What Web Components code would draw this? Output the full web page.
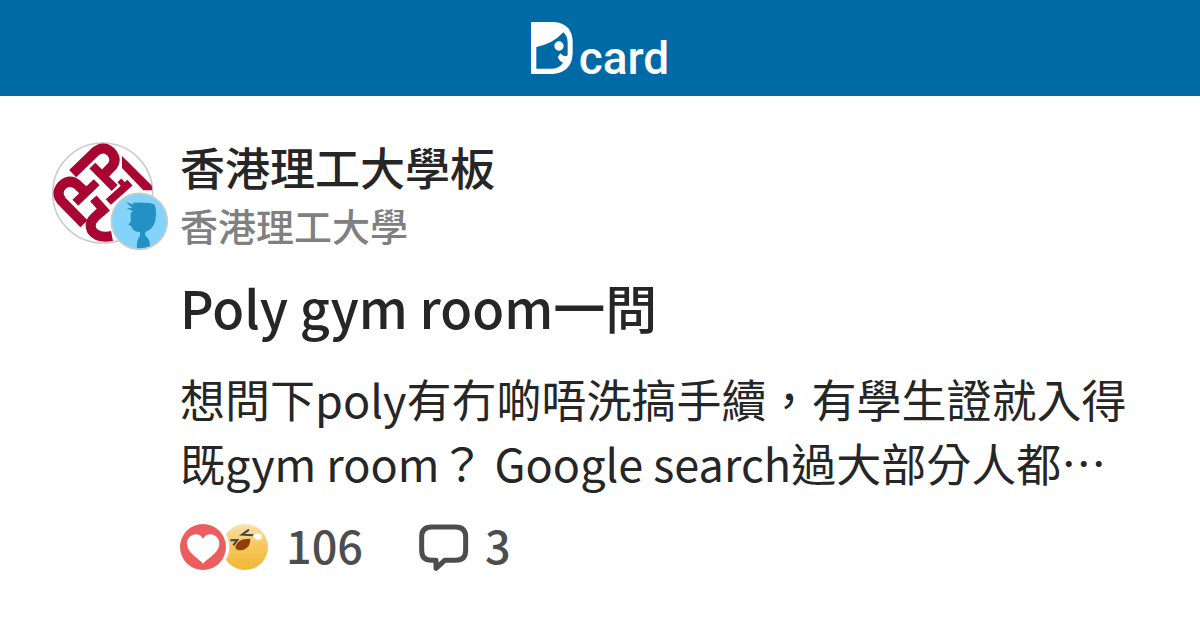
<!DOCTYPE html>
<html lang="zh-Hant">
<head>
<meta charset="utf-8">
<meta name="viewport" content="width=device-width, initial-scale=1">
<title>Poly gym room一問 - 香港理工大學板 | Dcard</title>
<style>
body { margin: 0; background: #fff; color: #262626; font-family: "Noto Sans CJK TC", sans-serif; }
</style>
</head>
<body>
<share-card></share-card>
<script>
const define = (name, html) => {
  const template = document.createElement('template');
  template.innerHTML = html;
  customElements.define(name, class extends HTMLElement {
    constructor() {
      super();
      this.attachShadow({ mode: 'open' }).append(template.content.cloneNode(true));
    }
  });
};

define('brand-header', `
<style>
:host { display: flex; justify-content: center; background: #006aa6; color: #fff; height: 96px; align-items: center; }
.logo { display: flex; align-items: flex-end; gap: 5px; }
svg { display: block; width: 43px; height: 52px; }
span { font: 500 46px/32px Roboto, sans-serif; }
</style>
<div class="logo">
<svg viewBox="0 0 129 156" aria-hidden="true">
<path fill="#fff" fill-rule="evenodd" d="M0 0H68Q124 4 125 60V94Q123 151 66 156H0ZM16 75V140H64Q86 139 96 122Q85 118 80 106L88 94Q97 106 109 101L110 96V62Q110 42 97 31Q65 66 16 75Z"/>
<circle cx="84" cy="72" r="14" fill="#fff"/>
</svg>
<span>card</span>
</div>`);

define('forum-avatar', `
<style>
:host { display: block; }
svg { display: block; width: 116px; height: 108px; }
</style>
<svg viewBox="24 24 348 324" role="img" aria-label="香港理工大學">
<defs><clipPath id="crest"><circle cx="176" cy="177" r="149"/></clipPath><clipPath id="user"><circle cx="286" cy="262" r="81"/></clipPath></defs>
<circle cx="176" cy="177" r="150" fill="#fff" stroke="#ccc" stroke-width="5"/>
<g clip-path="url(#crest)">
<g fill="none" stroke="#a90533" stroke-width="25">
<path d="M86 119L154 53Q178 33 200 53Q221 75 204 97L176 126" stroke-width="30"/>
<path d="M145 95L212 162" stroke-width="25"/>
<path d="M120 269L53 201Q34 178 53 155Q77 133 100 152L128 178" stroke-width="30"/>
<path d="M158 145L94 206" stroke-width="25"/>
<path d="M258 146L193 204" stroke-width="23"/>
<path d="M226 139L246 160" stroke-width="16"/>
<path d="M148 193L188 238" stroke-width="26"/>
<path d="M174 230L152 250Q133 268 144 290Q162 314 204 306" stroke-width="30"/>
</g>
<path fill="#a90533" d="M234 66L338 169H298L234 102Z"/>
</g>
<circle cx="286" cy="262" r="84" fill="#83d3fb" stroke="#ccc" stroke-width="5"/>
<g clip-path="url(#user)" fill="#2491c3">
<path d="M246 204L270 212L266 206Q317 203 332 212Q339 232 334 260Q327 286 304 294V306Q319 311 319 350H279Q277 315 288 307V294Q266 294 262 276L253 272L260 263V237Q270 232 264 230L248 223L265 222Z"/>
</g>
</svg>`);

define('reaction-icons', `
<style>
:host { display: block; }
svg { display: block; width: 90px; height: 46px; }
</style>
<svg viewBox="12 18 270 138" role="img" aria-label="心情">
<defs><linearGradient id="skin" x2="0" y2="1"><stop stop-color="#fce0b1"/><stop offset=".5" stop-color="#f5c75a"/><stop offset="1" stop-color="#f1b739"/></linearGradient></defs>
<circle cx="207" cy="87" r="69" fill="url(#skin)"/>
<path d="M219 35L198 50L233 52" fill="none" stroke="#444" stroke-width="6"/>
<path d="M163 67L184 66L172 82" fill="none" stroke="#444" stroke-width="6"/>
<path d="M178 90Q182 61 223 62Q224 86 203 95Q184 101 178 90Z" fill="#963e0b"/>
<path d="M230 53Q242 43 255 49Q263 63 247 66Q237 64 230 53Z" fill="#fff"/>
<circle cx="81" cy="87" r="79" fill="#fff"/>
<circle cx="81" cy="87" r="69" fill="#ec5d5f"/>
<path d="M81 137C69 121 33 105 33 77C33 48 69 39 81 62C93 39 130 48 130 77C130 105 93 121 81 137Z" fill="#fff"/>
</svg>`);

define('comment-icon', `
<style>
:host { display: block; }
svg { display: block; width: 50px; height: 47px; }
</style>
<svg viewBox="742 38 150 141" role="img" aria-label="留言">
<path d="M779 47H852Q882 47 882 77V117Q882 147 852 147H819L793 171V147H779Q750 147 750 117V77Q750 47 779 47Z" fill="none" stroke="#4d4d4d" stroke-width="15" stroke-linejoin="round"/>
</svg>`);

define('post-stat', `
<style>
:host { display: flex; align-items: flex-start; gap: 16px; color: #4d4d4d; font-size: 45px; font-weight: 500; line-height: 42px; }
</style>
<slot name="icon"></slot><slot></slot>`);

define('share-card', `
<style>
:host { display: block; }
main { display: grid; grid-template-columns: auto 1fr; column-gap: 12px; padding: 46px 52px; }
h1, h2, p { margin: 0; }
h2 { font-size: 45px; font-weight: 500; line-height: 50px; }
.school { font-size: 38px; font-weight: 500; line-height: 44px; color: #808080; margin-top: 11px; }
article { grid-column: 2; }
h1 { font-size: 52px; font-weight: 500; line-height: 64px; margin-top: 25px; }
.excerpt { font-size: 45px; line-height: 64px; margin-top: 28px; }
footer { display: flex; gap: 56px; margin-top: 29px; }
</style>
<brand-header></brand-header>
<main>
<forum-avatar></forum-avatar>
<header><h2>香港理工大學板</h2><p class="school">香港理工大學</p></header>
<article>
<h1>Poly gym room一問</h1>
<p class="excerpt">想問下poly有冇啲唔洗搞手續，有學生證就入得既gym room？ Google search過大部分人都…</p>
<footer>
<post-stat><reaction-icons slot="icon"></reaction-icons>106</post-stat>
<post-stat><comment-icon slot="icon"></comment-icon>3</post-stat>
</footer>
</article>
</main>`);
</script>
</body>
</html>
